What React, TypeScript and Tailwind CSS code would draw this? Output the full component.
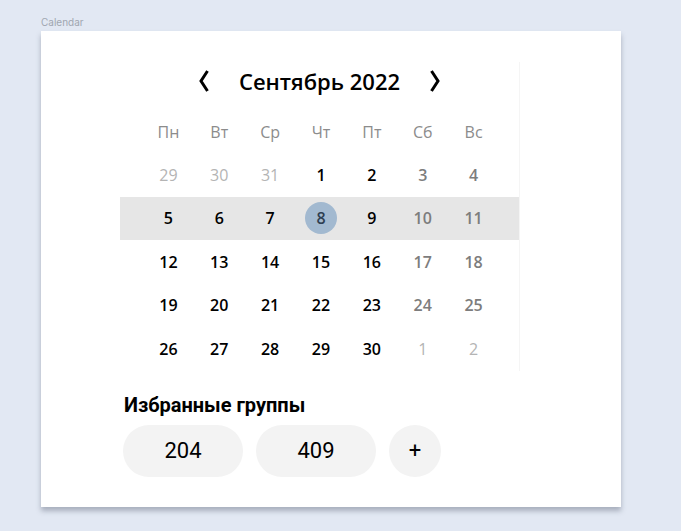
type Day = { n: number; kind: "out" | "day" | "weekend" };

const weekdays = ["Пн", "Вт", "Ср", "Чт", "Пт", "Сб", "Вс"];

function buildWeeks(): Day[][] {
  const days: Day[] = [];
  [29, 30, 31].forEach((n) => days.push({ n, kind: "out" }));
  for (let n = 1; n <= 30; n++) {
    const col = (n + 2) % 7; // 1 сентября — четверг
    days.push({ n, kind: col >= 5 ? "weekend" : "day" });
  }
  [1, 2].forEach((n) => days.push({ n, kind: "out" }));
  const weeks: Day[][] = [];
  for (let i = 0; i < days.length; i += 7) weeks.push(days.slice(i, i + 7));
  return weeks;
}

const weeks = buildWeeks();

function Chevron({ dir }: { dir: "left" | "right" }) {
  return (
    <svg width="12" height="24" viewBox="0 0 12 24" fill="none" className="text-black">
      <path
        d={dir === "left" ? "M9.5 2 L3 12 L9.5 22" : "M2.5 2 L9 12 L2.5 22"}
        stroke="currentColor"
        strokeWidth="3"
        strokeLinecap="butt"
        strokeLinejoin="miter"
      />
    </svg>
  );
}

export default function App() {
  return (
    <div className="w-[681px] h-[531px] bg-[#e2e8f3] pt-[16px] pl-[41px] font-['Open_Sans',sans-serif]">
      <div className="text-[10px] leading-[12px] text-[#a0a6b0] font-['Inter',sans-serif] mb-[3px]">Calendar</div>

      <div className="w-[580px] h-[476px] bg-white shadow-[0_4px_5px_rgba(60,70,90,0.35)] pt-[31px] pl-[79px]">
        {/* calendar */}
        <div className="w-[400px] border-r border-[#f5f5f5]">
          <div className="h-[38px] flex items-center justify-center mb-[10px]">
            <Chevron dir="left" />
            <span className="mx-[29px] text-[22px] font-semibold text-black">Сентябрь 2022</span>
            <Chevron dir="right" />
          </div>

          <div className="grid grid-cols-7 pl-[23px] pr-[20px] h-[43px] items-center">
            {weekdays.map((w) => (
              <div key={w} className="text-center text-[16px] text-[#8c8c8c]">
                {w}
              </div>
            ))}
          </div>

          {weeks.map((week, i) => (
            <div
              key={i}
              className={`grid grid-cols-7 pl-[23px] pr-[20px] h-[43.5px] items-center ${i === 1 ? "bg-[#e6e6e6]" : ""}`}
            >
              {week.map((d, j) => {
                const selected = i === 1 && d.n === 8;
                const color =
                  d.kind === "out"
                    ? "text-[#b4b4b4] font-normal"
                    : d.kind === "weekend"
                    ? "text-[#7d7d7d] font-semibold"
                    : "text-black font-semibold";
                return (
                  <div key={j} className="flex justify-center">
                    <span
                      className={`w-[32px] h-[32px] rounded-full flex items-center justify-center text-[16px] ${color} ${
                        selected ? "bg-[#a2b9d0] !text-[#2e3f52]" : ""
                      }`}
                    >
                      {d.n}
                    </span>
                  </div>
                );
              })}
            </div>
          ))}
        </div>

        {/* favourite groups */}
        <div className="mt-[22px] pl-[4px] font-['Roboto',sans-serif]">
          <div className="text-[20px] leading-[24px] font-bold text-black">Избранные группы</div>
          <div className="flex gap-[13px] mt-[8px] -ml-[1px]">
            <button className="w-[120px] h-[52px] rounded-full bg-[#f3f3f3] text-[22px] text-black">204</button>
            <button className="w-[120px] h-[52px] rounded-full bg-[#f3f3f3] text-[22px] text-black">409</button>
            <button className="w-[52px] h-[52px] rounded-full bg-[#f3f3f3] text-[22px] text-black">+</button>
          </div>
        </div>
      </div>
    </div>
  );
}
